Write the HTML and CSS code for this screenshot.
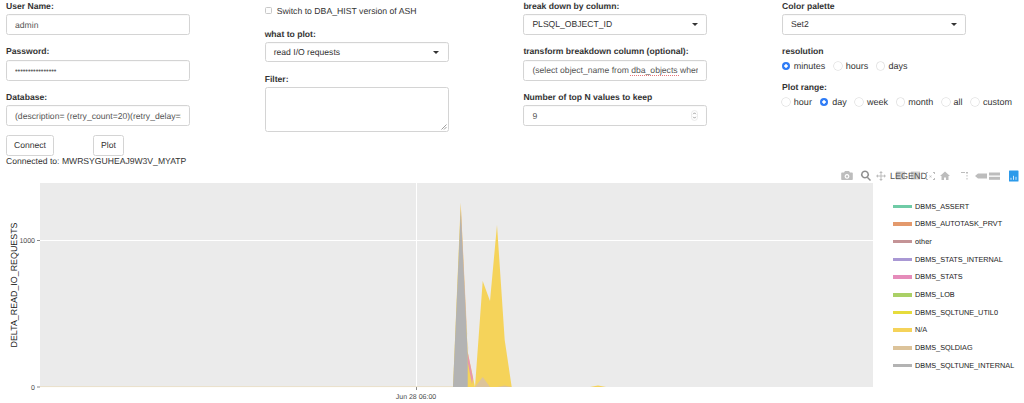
FILE: index.html
```html
<!DOCTYPE html>
<html lang="en">
<head>
<meta charset="utf-8">
<title>ASH viewer</title>
<link rel="stylesheet" href="styles.css">
</head>
<body>
<form class="controls">
  <div class="col">
    <div class="group"><label class="lbl">User Name:</label><input class="field" type="text" value="admin"></div>
    <div class="group"><label class="lbl">Password:</label><input class="field secret" type="password" value="aaaaaaaaaaaaaaaa"></div>
    <div class="group"><label class="lbl">Database:</label><input class="field" type="text" value="(description= (retry_count=20)(retry_delay=3)(address=(protocol=tcps)"></div>
    <div class="buttons"><button class="btn" type="button">Connect</button><button class="btn" type="button">Plot</button></div>
    <div class="status">Connected to: MWRSYGUHEAJ9W3V_MYATP</div>
  </div>
  <div class="col">
    <label class="check"><span class="box"></span>Switch to DBA_HIST version of ASH</label>
    <div class="group"><label class="lbl">what to plot:</label><div class="field select short">read I/O requests</div></div>
    <div class="group"><label class="lbl">Filter:</label>
      <div class="area"><svg class="grip" viewBox="0 0 6 6" width="6" height="6"><path d="M0.5 5.5 5.5 0.5M3 5.5 5.5 3" stroke="#777" stroke-width="0.7" fill="none"/></svg></div>
    </div>
  </div>
  <div class="col">
    <div class="group"><label class="lbl">break down by column:</label><div class="field select">PLSQL_OBJECT_ID</div></div>
    <div class="group"><label class="lbl">transform breakdown column (optional):</label>
      <div class="spell"><input class="field" type="text" value="(select object_name from dba_objects where object_id=PLSQL"><span class="squiggle"></span></div>
    </div>
    <div class="group"><label class="lbl">Number of top N values to keep</label>
      <div class="spell"><input class="field" type="text" value="9">
        <svg class="spin" viewBox="0 0 7 11" width="7" height="11"><rect x="0.5" y="0.5" width="6" height="10" rx="3" fill="#fff" stroke="#ddd" stroke-width="0.6"/><path d="M2.2 4.2 3.5 2.8 4.8 4.2M2.2 6.8 3.5 8.2 4.8 6.8" fill="none" stroke="#777" stroke-width="0.7"/></svg>
      </div>
    </div>
  </div>
  <div class="col">
    <div class="group"><label class="lbl">Color palette</label><div class="field select">Set2</div></div>
    <div class="group tight"><label class="lbl">resolution</label>
      <div class="radios res">
        <span class="radio on">minutes</span><span class="radio">hours</span><span class="radio">days</span>
      </div>
    </div>
    <div class="group tight"><label class="lbl">Plot range:</label>
      <div class="radios">
        <span class="radio">hour</span><span class="radio on">day</span><span class="radio">week</span><span class="radio">month</span><span class="radio">all</span><span class="radio">custom</span>
      </div>
    </div>
  </div>
</form>

<section class="plot">
  <svg class="chart" width="880" height="235" viewBox="0 168 880 235">
    <rect x="40" y="183" width="833" height="204" fill="#ebebeb"/>
    <path d="M40 240.5H873M416.5 183V387" stroke="#fff" stroke-width="1"/>
    <path d="M37 240.5H40M37 387H40M416.5 387V390" stroke="#555" stroke-width="0.7"/>
    <path d="M40 386.6H453" stroke="#e8dcc0" stroke-width="0.8"/>
    <path d="M453 387 460.7 203 467.7 352 475 387 482.7 281 490 301 497 225 504.7 340 511.7 387Z" fill="#f5d35a"/>
    <path d="M460.7 203 467.7 345 468.5 352 461 260Z" fill="#e3b0a0" opacity="0.7"/>
    <path d="M467.7 352 473 378 472 384 467.7 362Z" fill="#e58cba" opacity="0.85"/>
    <path d="M453 387 460.7 210 467.7 355V387Z" fill="#b3b3b3"/>
    <path d="M475 387 482.7 377 490 387Z" fill="#dcc39a"/>
    <path d="M497 387 504.7 385.5 511.7 387Z" fill="#dcc39a"/>
    <path d="M590 387 598 385.6 606 387Z" fill="#f5d35a"/>
    <text class="tick" x="35" y="242.5" text-anchor="end">1000</text>
    <text class="tick" x="35" y="389.5" text-anchor="end">0</text>
    <text class="tick" x="416" y="398.5" text-anchor="middle">Jun 28 06:00</text>
    <text class="ytitle" transform="translate(17 285) rotate(-90)" text-anchor="middle">DELTA_READ_IO_REQUESTS</text>
  </svg>
  <ul class="legend">
    <li><i class="s1"></i>DBMS_ASSERT</li>
    <li><i class="s2"></i>DBMS_AUTOTASK_PRVT</li>
    <li><i class="s3"></i>other</li>
    <li><i class="s4"></i>DBMS_STATS_INTERNAL</li>
    <li><i class="s5"></i>DBMS_STATS</li>
    <li><i class="s6"></i>DBMS_LOB</li>
    <li><i class="s7"></i>DBMS_SQLTUNE_UTIL0</li>
    <li><i class="s8"></i>N/A</li>
    <li><i class="s9"></i>DBMS_SQLDIAG</li>
    <li><i class="s10"></i>DBMS_SQLTUNE_INTERNAL</li>
  </ul>
  <div class="legend-title">LEGEND</div>
  <svg class="modebar" width="184" height="14" viewBox="840 169 184 14">
    <g fill="#bdbdbd">
      <path d="M842 172.5h2l1-1.500h4l1 1.500h2a.8.8 0 0 1 .8.8v6a.8.8 0 0 1-.8.8h-10a.8.8 0 0 1-.8-.8v-6a.8.8 0 0 1 .8-.8zM847 174a2.400 2.400 0 1 0 .01 0zM847 175.200a1.200 1.200 0 1 1-.01 0z" fill-rule="evenodd"/>
      <path d="M865 170.500a4 4 0 1 1-.01 0zM865 172a2.500 2.500 0 1 0 .01 0z" fill="#8f8f8f" fill-rule="evenodd"/>
      <path d="M867.800 176.800 871 180 870 181 866.800 177.800z" fill="#8f8f8f"/>
      <path d="M881 171 882.800 173H881.500V175.500H884V174.200L886 176 884 177.800V176.500H881.500V179H882.800L881 181 879.200 179H880.500V176.500H878V177.800L876 176 878 174.200V175.500H880.500V173H879.200Z"/>
      <rect x="896" y="171.500" width="9" height="8" opacity="0.7"/>
      <rect x="911" y="171.500" width="9" height="8" opacity="0.7"/>
      <path d="M926 172h2v1h-1v1h-1zM933 172h2v2h-1v-1h-1zM926 178h1v1h1v1h-2zM934 178h1v2h-2v-1h1zM929 175l1.500 1 1.500-1-1 1.500 1 1.500-1.500-1-1.500 1 1-1.500z"/>
      <path d="M945 171.500 950 176H948.500V180H946V177.500H944V180H941.500V176H940Z"/>
      <path d="M961 172h4v1h-4zM966 172h2v1.500h-2zM966.500 175h1v1.500h-1zM966.500 178h1v1.500h-1z"/>
      <path d="M975 176 978 173.500H987V178.500H978Z"/>
      <rect x="989" y="172.500" width="11" height="3"/>
      <rect x="989" y="176.800" width="11" height="3"/>
    </g>
    <rect x="1009" y="170.500" width="9.500" height="11" rx="0.500" fill="#2c9aea"/>
    <path d="M1011 179.800v-2M1013.500 179.800v-4M1016 179.800v-3" stroke="#cfe8fb" stroke-width="1"/>
  </svg>
</section>
</body>
</html>
```

FILE: styles.css
```css
*, *::before, *::after { box-sizing: border-box; }
html, body { margin: 0; padding: 0; background: #fff; }
body {
  width: 1024px;
  height: 403px;
  overflow: hidden;
  font-family: "Liberation Sans", Arial, sans-serif;
  font-size: 8.6px;
  line-height: 12.3px;
  color: #333;
  text-rendering: geometricPrecision;
}
input, button { text-rendering: geometricPrecision; }
.controls {
  display: grid;
  grid-template-columns: repeat(4, 258.7px);
  padding-left: 6px;
  height: 168px;
}
.col { width: 184px; }
.group { margin-bottom: 10.3px; }
.group.tight { margin-bottom: 9.5px; }
.lbl { display: block; font-weight: bold; height: 14.2px; }
.field {
  display: block;
  width: 184px;
  height: 21px;
  padding: 0 8px;
  border: 1px solid #d4d4d4;
  border-radius: 2.5px;
  background: #fff;
  color: #555;
  font: 8.6px/19px "Liberation Sans", Arial, sans-serif;
  box-shadow: inset 0 0.5px 1px rgba(0,0,0,.05);
  outline: none;
}
.secret { font-size: 7.4px; color: #666; }
.select {
  position: relative;
  color: #333;
}
.select::after {
  content: "";
  position: absolute;
  right: 8.5px;
  top: 8px;
  border-style: solid;
  border-width: 3px 3px 0;
  border-color: #333 transparent transparent;
}
.select.short { height: 20.5px; line-height: 18.5px; }
.buttons { display: flex; gap: 39px; margin-top: -1.5px; }
.btn {
  height: 21px;
  padding: 0 7px;
  border: 1px solid #d4d4d4;
  border-radius: 2.5px;
  background: #fff;
  color: #333;
  font: 8.6px "Liberation Sans", Arial, sans-serif;
}
.status { line-height: 11px; }
.check {
  display: flex;
  align-items: center;
  gap: 5px;
  height: 27.8px;
  padding-bottom: 6px;
  font-size: 8.7px;
}
.box {
  width: 7px;
  height: 7px;
  border: 0.7px solid #c8c8c8;
  border-radius: 1.5px;
  background: #fdfdfd;
}
.area {
  position: relative;
  width: 184px;
  height: 45.5px;
  border: 1px solid #d4d4d4;
  border-radius: 2.5px;
  background: #fff;
}
.grip { position: absolute; right: 1px; bottom: 1px; }
.spell { position: relative; }
.squiggle {
  position: absolute;
  left: 107px;
  top: 15px;
  width: 49px;
  border-bottom: 1px dotted #e8767a;
}
.spin { position: absolute; right: 9px; top: 5px; }
.radios { display: flex; height: 12.3px; align-items: center; }
.radio {
  display: flex;
  align-items: center;
  gap: 4px;
  margin-right: 8.5px;
  font-size: 9px;
  color: #333;
  white-space: nowrap;
}
.radio::before {
  content: "";
  width: 7.8px;
  height: 7.8px;
  border-radius: 50%;
  background: #fff;
  box-shadow: 0 0 0 0.6px #d6d6d6;
}
.radio.on::before {
  background: radial-gradient(circle, #fff 0 1.5px, #2f7cf6 1.8px);
  box-shadow: none;
}
.plot {
  position: relative;
  display: flex;
  height: 235px;
}
.chart { display: block; flex: none; }
.tick { font-size: 7px; fill: #4d4d4d; }
.ytitle { font-size: 8.9px; fill: #222; }
.legend {
  list-style: none;
  margin: 0;
  padding: 29.5px 0 0 13px;
  flex: 1;
}
.legend li {
  display: flex;
  align-items: center;
  gap: 3px;
  height: 17.7px;
  font-size: 7.3px;
  line-height: 17.7px;
  color: #222;
  white-space: nowrap;
}
.legend i { flex: none; width: 19px; height: 3.5px; }
.s1 { background: #6fcba6; }
.s2 { background: #e3996c; }
.s3 { background: #c49396; }
.s4 { background: #a998d4; }
.s5 { background: #e58cba; }
.s6 { background: #aad066; }
.s7 { background: #e6dc3c; }
.s8 { background: #f5d35a; }
.s9 { background: #dcc39a; }
.s10 { background: #b3b3b3; }
.legend-title {
  position: absolute;
  left: 890px;
  top: 3px;
  font-size: 9px;
  line-height: 11px;
  color: #555;
  z-index: 2;
}
.modebar { position: absolute; left: 840px; top: 1px; }
```
